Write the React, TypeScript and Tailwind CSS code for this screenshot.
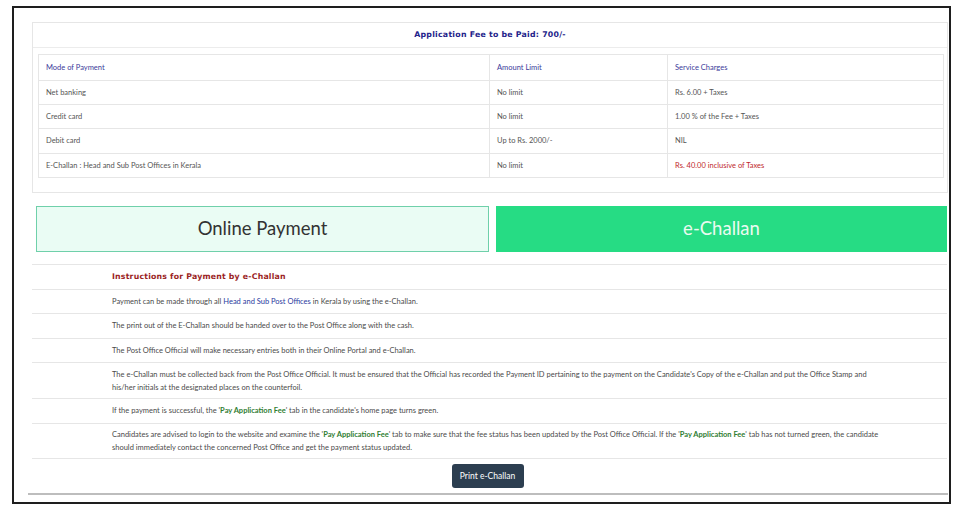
import React from "react";

const rows: [string, string, string, boolean][] = [
  ["Net banking", "No limit", "Rs. 6.00 + Taxes", false],
  ["Credit card", "No limit", "1.00 % of the Fee + Taxes", false],
  ["Debit card", "Up to Rs. 2000/-", "NIL", false],
  ["E-Challan : Head and Sub Post Offices in Kerala", "No limit", "Rs. 40.00 inclusive of Taxes", true],
];

const PAF = () => (
  <>
    '<span className="text-[#2f7d32] font-bold">Pay Application Fee</span>'
  </>
);

export default function App() {
  const lato = { fontFamily: "Lato, 'Open Sans', sans-serif" };
  const verd = { fontFamily: "'DejaVu Sans', Verdana, sans-serif" };
  return (
    <div className="w-[963px] h-[510px] bg-white overflow-hidden" style={lato}>
      <div className="ml-[12px] mt-[6px] w-[939px] h-[498px] border-2 border-[#1e1e1e] flex flex-col">
        {/* fee panel */}
        <div className="ml-[18px] mt-[14px] w-[916px] border border-[#e6e6e6] flex flex-col">
          <div className="h-[25px] border-b border-[#ececec] flex items-center justify-center">
            <span className="text-[7.8px] font-bold text-[#23238a] tracking-[0.25px]" style={verd}>
              Application Fee to be Paid: 700/-
            </span>
          </div>
          <div className="mt-[6px] ml-[5px] mb-[14px] w-[906px] border border-[#e6e6e6]">
            <div className="grid grid-cols-[450px_178px_1fr] h-[24.5px] items-center text-[7.5px] text-[#3b3b9a]">
              <div className="pl-[7px] h-full flex items-center">Mode of Payment</div>
              <div className="pl-[7px] h-full flex items-center border-l border-[#e6e6e6]">Amount Limit</div>
              <div className="pl-[7px] h-full flex items-center border-l border-[#e6e6e6]">Service Charges</div>
            </div>
            {rows.map((r, i) => (
              <div key={i} className="grid grid-cols-[450px_178px_1fr] h-[24.4px] border-t border-[#e6e6e6] text-[7.5px] text-[#555]">
                <div className="pl-[7px] h-full flex items-center">{r[0]}</div>
                <div className="pl-[7px] h-full flex items-center border-l border-[#e6e6e6]">{r[1]}</div>
                <div className={`pl-[7px] h-full flex items-center border-l border-[#e6e6e6] ${r[3] ? "text-[#c0282d]" : ""}`}>{r[2]}</div>
              </div>
            ))}
          </div>
        </div>

        {/* buttons */}
        <div className="ml-[22px] mt-[13px] w-[911px] flex gap-[7px] h-[46px]">
          <div className="flex-1 bg-[#eafcf4] border border-[#6fd0aa] flex items-center justify-center text-[18.5px] text-[#333]">
            Online Payment
          </div>
          <div className="flex-1 bg-[#26dc84] flex items-center justify-center text-[18.5px] text-[#eafaf0]">
            e-Challan
          </div>
        </div>

        {/* instructions */}
        <div className="ml-[18px] mt-[12px] w-[915px] text-[7.5px] text-[#4a4a4a]">
          <div className="h-[25px] border-t border-[#e6e6e6] flex items-center pl-[80px]">
            <span className="text-[7.8px] font-bold text-[#9b1f1f] tracking-[0.2px]" style={verd}>
              Instructions for Payment by e-Challan
            </span>
          </div>
          <div className="h-[24px] border-t border-[#e6e6e6] flex items-center pl-[80px]">
            <span>
              Payment can be made through all <span className="text-[#2a3aa0]">Head and Sub Post Offices</span> in Kerala by using the e-Challan.
            </span>
          </div>
          <div className="h-[25px] border-t border-[#e6e6e6] flex items-center pl-[80px]">
            The print out of the E-Challan should be handed over to the Post Office along with the cash.
          </div>
          <div className="h-[24px] border-t border-[#e6e6e6] flex items-center pl-[80px]">
            The Post Office Official will make necessary entries both in their Online Portal and e-Challan.
          </div>
          <div className="h-[36px] border-t border-[#e6e6e6] flex items-center pl-[80px] leading-[13px]">
            <span>
              The e-Challan must be collected back from the Post Office Official. It must be ensured that the Official has recorded the Payment ID pertaining to the payment on the Candidate's Copy of the e-Challan and put the Office Stamp and
              <br />
              his/her initials at the designated places on the counterfoil.
            </span>
          </div>
          <div className="h-[25px] border-t border-[#e6e6e6] flex items-center pl-[80px]">
            <span>
              If the payment is successful, the <PAF /> tab in the candidate's home page turns green.
            </span>
          </div>
          <div className="h-[36px] border-t border-b border-[#e6e6e6] flex items-center pl-[80px] leading-[13px]">
            <span>
              Candidates are advised to login to the website and examine the <PAF /> tab to make sure that the fee status has been updated by the Post Office Official. If the <PAF /> tab has not turned green, the candidate
              <br />
              should immediately contact the concerned Post Office and get the payment status updated.
            </span>
          </div>
          <div className="h-[34px] flex items-start justify-center pt-[5px] pr-[4px]">
            <div className="w-[72px] h-[24px] bg-[#2c3e50] rounded-[3px] flex items-center justify-center text-white text-[8.5px]">
              Print e-Challan
            </div>
          </div>
        </div>
        <div className="ml-[14px] w-[920px] h-[2px] bg-[#bdbdbd]" />
      </div>
    </div>
  );
}
